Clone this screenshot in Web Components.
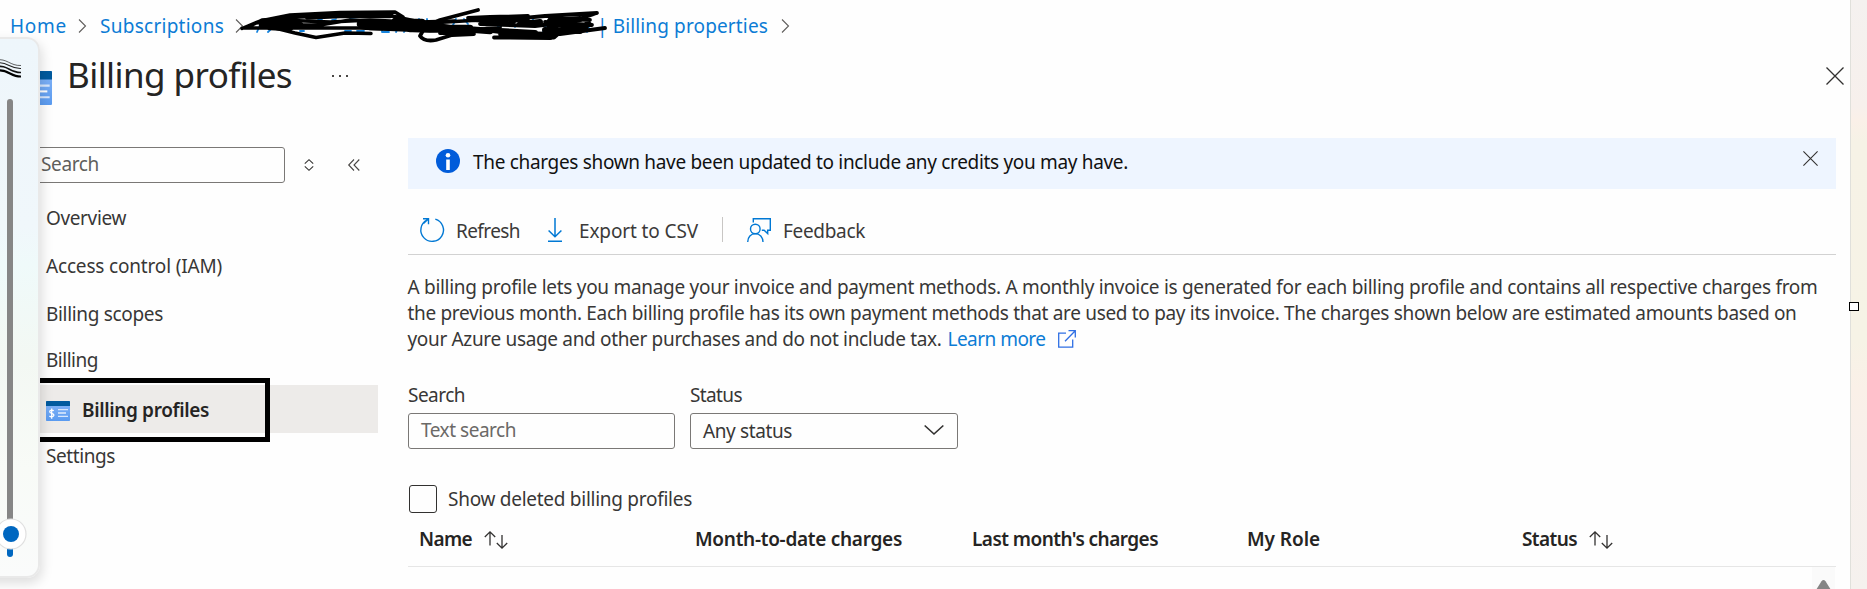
<!DOCTYPE html>
<html lang="en"><head><meta charset="utf-8"><title>Billing profiles</title>
<style>html,body{margin:0;height:100%;overflow:hidden;background:#fff;font-family:"Noto Sans","Open Sans",sans-serif;font-size:19px;color:#383736}</style>
</head><body>
<billing-app></billing-app>
<script>
const define=(name,html,after)=>customElements.define(name,class extends HTMLElement{
  connectedCallback(){ if(this.shadowRoot)return; this.attachShadow({mode:'open'}).innerHTML=html; if(after)after(this); }
});

/* Single line of text, tracked so that its advance equals the w attribute */
define('fit-text','<style>:host{display:block;white-space:nowrap;flex:none}span{display:inline-block}</style><span><slot></slot></span>',el=>{
  const w=+el.getAttribute('w'); if(!w)return;
  const s=el.shadowRoot.querySelector('span'), n=el.textContent.length;
  s.style.letterSpacing=((w-s.getBoundingClientRect().width)/n)+'px';
  el.style.width=w+'px';
});

const ICONS={
 chev:['9 14','<path d="M1 .5 7.500 7 1 13.500" stroke="#605e5c" stroke-width="1.100"/>'],
 x:['18 18','<path d="M.5.5l17 17M17.500.5l-17 17" stroke="#323130" stroke-width="1.300"/>'],
 updown:['10 12','<path d="M.8 4.600 5 .7l4.200 3.900M.8 7.400 5 11.300l4.200-3.900" stroke="#323130" stroke-width="1.100"/>'],
 dbl:['12 12','<path d="M6 .5.7 6 6 11.500M11.300.5 6 6l5.300 5.500" stroke="#484644" stroke-width="1.100"/>'],
 down:['18 10','<path d="M.6.6 9 9 17.400.6" stroke="#323130" stroke-width="1.400"/>'],
 sort:['24 18','<path d="M6 14.500V.8M.8 6 6 .8 11.200 6M18 4v13.200M12.800 12 18 17.200 23.200 12" stroke="#323130" stroke-width="1.300"/>'],
 info:['24 24','<circle cx="12" cy="12" r="12" fill="#015cda"/><circle cx="12" cy="6.300" r="2.300" fill="#fff"/><path d="M12 10.500V21" stroke="#fff" stroke-width="3.600"/>'],
 refresh:['24 24','<path d="M15.300 1.200A11.300 11.300 0 1 1 7.200 1.900M3 .7h5.500v5.500M8.300 1 3.500 5.500" stroke="#0078d4" stroke-width="1.400"/>'],
 exp:['14 24','<path d="M7 0v18.500M.6 12.500 7 18.800l6.400-6.300M0 23.200h14" stroke="#0078d4" stroke-width="1.500"/>'],
 feedback:['24 24','<path d="M6.300 4.500V.8h17v11.500h-2.600v3.300l-3.600-3.300h-2.300M.7 24c0-5 3.200-8.400 7.600-8.400S16 19 16 24" stroke="#0078d4" stroke-width="1.400"/><circle cx="8.300" cy="11" r="4.800" stroke="#0078d4" stroke-width="1.400"/>'],
 ext:['18 18','<path d="M8 3.200H.7v14h14V9.500M10.500.7H17.300v6.800M17 1 7 11.200" stroke="#2f6fe4" stroke-width="1.300"/>'],
 card:['24 20','<defs><linearGradient id="g" x1="0" x2="0" y1="0" y2="1"><stop stop-color="#86b6f8"/><stop offset="1" stop-color="#5a9bf0"/></linearGradient></defs><rect width="24" height="20" rx=".8" fill="url(#g)"/><path d="M0 5V.8Q0 0 .8 0h22.400q.8 0 .8.8V5z" fill="#005a9e"/><path d="M12 8.600h10M12 15.400h10" stroke="#d7e7fd" stroke-width="1.200"/><path d="M12 12h8" stroke="#fff" stroke-width="1.200"/><path d="M7.700 9.800C6.500 8.700 3.700 8.900 3.700 10.700c0 2 4.200 1.300 4.200 3.400 0 1.900-3 2.100-4.500.8M5.700 7.500v10.300" stroke="#fff" stroke-width="1.300"/>']
};
define('ui-icon','',el=>{
  const [box,body]=ICONS[el.getAttribute('name')], [w,h]=box.split(' ');
  const W=el.getAttribute('w')||w, H=el.getAttribute('h')||h;
  el.shadowRoot.innerHTML=`<style>:host{display:block;flex:none;width:${W}px;height:${H}px}svg{display:block;overflow:visible}</style><svg width="${W}" height="${H}" viewBox="0 0 ${box}" preserveAspectRatio="none" fill="none">${body}</svg>`;
});

define('crumb-bar',`<style>
:host{display:flex;align-items:center;height:52px;padding-left:10px;box-sizing:border-box;color:#0c7cd5}
.hidden{width:341px;height:30px;flex:none}
</style>
<fit-text w="57">Home</fit-text><ui-icon name="chev" style="margin:0 13px 0 11px"></ui-icon>
<fit-text w="124">Subscriptions</fit-text><ui-icon name="chev" style="margin-left:11px"></ui-icon>
<span class="hidden"></span>
<fit-text w="171" style="margin-left:12px">| Billing properties</fit-text><ui-icon name="chev" style="margin-left:13px"></ui-icon>`);

/* Pen strokes that cover the subscription name */
define('ink-scribble',`<style>:host{position:absolute;left:235px;top:5px}svg{display:block}</style>
<svg width="380" height="42" viewBox="235 5 380 42" fill="none" stroke-linecap="round" stroke-linejoin="round">
<path d="M257 32l4-9M268 32l3-3M290 32l-4-3M300 31h4M318 19h4M332 20l4-1M350 19l8 1M345 31h6M357 31h7M382 32v-5M382 32h7M396 32l2-4M404 32l4-6M419 19v4M427 19v12M443 20v5M456 19l-3 6M464 19l4 5M498 19v9M506 20l-6 7M512 20l3 7M533 19v5M543 32l5-11M556 20v12M563 20v12M572 32V20l9 12M587 32l3-8" stroke="#1683dc" stroke-width="1.800"/>
<path d="M242 28.500L260 21 290 15 340 12.500 395 12 403 17M248 27L262 20 300 17 350 15 392 16 420 22 455 21M243 28H300L360 28 430 31 500 30M256 23L280 20 330 22 370 20 430 23 480 20 520 20M285 25L320 25 350 20 390 22 420 26M275 28L295 33 316 37.500 345 33 371 33.500" stroke="#000" stroke-width="3.500"/>
<path d="M262 23L277 21 290 28 270 27M360 24L400 25 440 26M262 25H300M308 16.500L340 15 390 15M370 27L420 28 470 28M395 21L425 25 450 28 490 31M404 22H422M410 29H445" stroke="#000" stroke-width="6.500"/>
<path d="M478 10L440 20 425 27 420 36Q424 42 436 40L452 35 474 34M468 18L490 17 528 16 510 23 480 24 535 26 560 23M468 18L500 20 545 16 597 13 582 18 590 24 585 28 550 25M475 29L510 33 560 34 605 28M494 37.500H554L558 34M500 34H550M550 18L590 20M545 22L592 25M440 33L470 31 500 27" stroke="#000" stroke-width="3.800"/>
<path d="M430 27L470 29M472 19L492 20M505 18H527M520 24L540 22M550 21L580 19M500 31L535 33M545 30L580 31M510 36L550 37M548 24L560 32" stroke="#000" stroke-width="6"/>
</svg>`);

define('title-bar',`<style>
:host{display:flex;align-items:center;height:66px;box-sizing:border-box;padding:0 6px 18px 24px}
fit-text{font-size:35px;line-height:48px;color:#252423;margin-top:-2px}
.dots{display:flex;gap:5px;margin:0 auto 0 40px}.dots i{width:2px;height:2px;background:#484644}
ui-icon.card{margin:24px 15px 0 0}
</style>
<ui-icon class="card" name="card" w="28" h="34"></ui-icon><fit-text w="225">Billing profiles</fit-text>
<span class="dots"><i></i><i></i><i></i></span><ui-icon name="x"></ui-icon>`);

define('menu-row',`<style>
:host{display:flex;align-items:center;height:48px;padding-left:46px;box-sizing:border-box;color:#383736}
:host([selected]){background:#edebe9;font-weight:600;color:#252423}
:host([selected]) ::slotted(fit-text){margin-top:2px}
::slotted(ui-icon){margin:4px 12px 0 0}
</style><slot></slot>`);

define('side-menu',`<style>
:host{display:block;width:378px;flex:none;padding-top:29px;box-sizing:border-box}
.search{display:flex;align-items:center;margin-bottom:11px}
.box{display:flex;align-items:center;width:285px;height:36px;box-sizing:border-box;border:1px solid #7a7876;border-radius:3px;padding:0 0 3px 40px;color:#605e5c}
.gap{margin:0 34px 0 19px}
</style>
<div class="search"><div class="box"><fit-text w="58">Search</fit-text></div><ui-icon class="gap" name="updown"></ui-icon><ui-icon name="dbl"></ui-icon></div>
<menu-row><fit-text w="80">Overview</fit-text></menu-row>
<menu-row><fit-text w="176">Access control (IAM)</fit-text></menu-row>
<menu-row><fit-text w="117">Billing scopes</fit-text></menu-row>
<menu-row style="height:44px"><fit-text w="52">Billing</fit-text></menu-row>
<menu-row selected style="margin-top:3px"><ui-icon name="card"></ui-icon><fit-text w="127">Billing profiles</fit-text></menu-row>
<menu-row style="height:46px"><fit-text w="69">Settings</fit-text></menu-row>`);

define('info-banner',`<style>
:host{display:flex;height:51px;background:#eef5ff;box-sizing:border-box;padding:11px 18px 0 28px;color:#111}
fit-text{margin:0 auto 0 13px;line-height:26px}ui-icon.close{margin-top:2px}
</style><ui-icon name="info"></ui-icon><fit-text w="655">The charges shown have been updated to include any credits you may have.</fit-text><ui-icon class="close" name="x" w="15" h="15"></ui-icon>`);

define('tool-bar',`<style>
:host{display:flex;align-items:center;height:66px;box-sizing:border-box;padding:16px 0 0 12px;border-bottom:1px solid #d2d2d2;color:#3b3a39}
fit-text{margin-left:12px;padding-top:2px}i{width:1px;height:25px;background:#c8c6c4;margin:0 24px}
</style>
<ui-icon name="refresh"></ui-icon><fit-text w="64">Refresh</fit-text>
<ui-icon name="exp" style="margin-left:28px"></ui-icon><fit-text w="119" style="margin-left:17px">Export to CSV</fit-text>
<i></i><ui-icon name="feedback"></ui-icon><fit-text w="82">Feedback</fit-text>`);

define('text-field',`<style>
:host{display:block;width:268px}
.label{line-height:26px;margin-bottom:5px}
.box{display:flex;align-items:center;justify-content:space-between;height:36px;box-sizing:border-box;border:1px solid #7a7876;border-radius:3px;padding:0 13px 2px 12px}
</style><div class="label"><slot name="label"></slot></div><div class="box"><slot></slot></div>`);

define('col-head',`<style>:host{display:flex;align-items:center;font-weight:600;color:#252423}::slotted(ui-icon){margin:2px 0 0 12px}</style><slot></slot>`);

define('main-pane',`<style>
:host{display:block;width:1428px;margin:20px 14px 0 30px}
.desc{line-height:26px;padding:19px 0 0}
.desc>*{margin-left:-.5px}
.line{display:flex;align-items:center}
.link{color:#0c7cd5;margin:0 12px 0 6px}
.filters{display:flex;gap:15px;margin-top:30px}
.check{display:flex;align-items:center;margin-top:36px;height:28px;gap:11px}
.check i{width:28px;height:28px;box-sizing:border-box;border:1.500px solid #323130;border-radius:3px;margin-left:1px}
.head{display:grid;grid-template-columns:276px 277px 275px 275px 1fr;padding:0 0 1px 11px;height:54px;box-sizing:border-box;border-bottom:1px solid #e6e6e6}
.scroll{display:flex;justify-content:center;width:23px;height:22px;margin:0 1px 0 auto;background:#fafafa}
</style>
<info-banner></info-banner><tool-bar></tool-bar>
<div class="desc">
<fit-text w="1410">A billing profile lets you manage your invoice and payment methods. A monthly invoice is generated for each billing profile and contains all respective charges from</fit-text>
<fit-text w="1389">the previous month. Each billing profile has its own payment methods that are used to pay its invoice. The charges shown below are estimated amounts based on</fit-text>
<div class="line"><fit-text w="534">your Azure usage and other purchases and do not include tax.</fit-text><fit-text class="link" w="98">Learn more</fit-text><ui-icon name="ext"></ui-icon></div>
</div>
<div class="filters">
<text-field style="width:267px"><fit-text slot="label" w="57">Search</fit-text><fit-text w="95" style="color:#6b6967">Text search</fit-text></text-field>
<text-field><fit-text slot="label" w="52">Status</fit-text><fit-text w="89" style="padding-top:2px">Any status</fit-text><ui-icon name="down" w="20"></ui-icon></text-field>
</div>
<div class="check"><i></i><fit-text w="244">Show deleted billing profiles</fit-text></div>
<div class="head">
<col-head><fit-text w="53">Name</fit-text><ui-icon name="sort"></ui-icon></col-head>
<col-head><fit-text w="207">Month-to-date charges</fit-text></col-head>
<col-head><fit-text w="186">Last month's charges</fit-text></col-head>
<col-head><fit-text w="73">My Role</fit-text></col-head>
<col-head><fit-text w="55">Status</fit-text><ui-icon name="sort"></ui-icon></col-head>
</div>
<div class="scroll"><svg width="15" height="10" style="margin-top:13px"><path d="M0 10 5.500 1.200Q7.500-1 9.500 1.200L15 10z" fill="#858585"/></svg></div>`);

/* Floating pen-thickness slider */
define('pen-slider',`<style>
:host{position:absolute;left:-20px;top:37px;width:60px;height:541px;box-sizing:border-box;border:2px solid #e9e9e9;border-left:0;border-radius:0 13px 13px 0;background:linear-gradient(#eef6fb,#f0f7fb 35%,#effafa 42%,#f3f8f3 60%,#f8fbf7 80%,#fafbfb);box-shadow:2px 5px 12px #00000022}
svg{display:block}
</style><svg width="58" height="537" viewBox="-20 39 58 537" fill="none">
<path d="M-4 60C7 58 10 66 21 65.500" stroke="#222" stroke-width=".7"/>
<path d="M-4 63C7 61 10 69 21 68.500" stroke="#222" stroke-width="1.100"/>
<path d="M-4 67C7 64 10 73 21 72.500" stroke="#111" stroke-width="1.600"/>
<path d="M-4 71C7 68 11 77 21 76.500" stroke="#000" stroke-width="2.200"/>
<path d="M10 102v430" stroke="#868686" stroke-width="6" stroke-linecap="round"/>
<path d="M10 540v14" stroke="#0067c0" stroke-width="6" stroke-linecap="round"/>
<circle cx="11" cy="534" r="15" fill="#fff" stroke="#e0e0e0" stroke-width="1.200"/><circle cx="11" cy="534" r="8" fill="#0067c0"/>
</svg>`);

define('billing-app',`<style>
:host{display:flex;position:relative;width:1867px;height:589px;overflow:hidden}
main{width:1850px;height:589px;overflow:hidden;background:#fefefe}
.cols{display:flex}
aside{flex:1;border-left:1px solid #e0e0db;background:linear-gradient(#f4f1ef,#f7f0ec 18%,#faf0e8 20.500%,#f6f2e6 24%,#f6f3e6 58%,#faf0e8 66%,#f7f0ec 80%,#f5f1ee)}
.frame{position:absolute;left:30px;top:378px;width:240px;height:64px;box-sizing:border-box;border:5px solid #000}
.grip{position:absolute;left:1849px;top:302px;width:10px;height:9px;box-sizing:border-box;border:1.500px solid #000;background:#fff}
</style>
<main><crumb-bar></crumb-bar><title-bar></title-bar><div class="cols"><side-menu></side-menu><main-pane></main-pane></div></main>
<aside></aside><ink-scribble></ink-scribble><div class="frame"></div><div class="grip"></div><pen-slider></pen-slider>`);
</script></body></html>
